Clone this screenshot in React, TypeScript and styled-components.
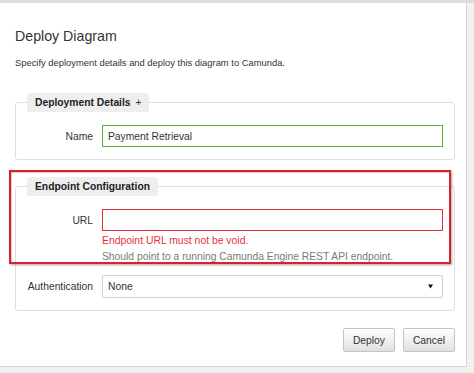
import React from 'react';
import styled, { createGlobalStyle } from 'styled-components';

const GlobalStyle = createGlobalStyle`
  html, body {
    margin: 0;
    padding: 0;
    background: #f1f1f1;
  }
  body {
    font-family: 'Liberation Sans', Arial, sans-serif;
    color: #333;
  }
`;

function App() {
  return (
    <Page>
      <GlobalStyle />
      <Dialog>
        <Title>Deploy Diagram</Title>
        <Intro>Specify deployment details and deploy this diagram to Camunda.</Intro>

        <Section>
          <Legend>
            Deployment Details <Toggle>+</Toggle>
          </Legend>
          <Row>
            <Label>Name</Label>
            <Input state='ok' value='Payment Retrieval' readOnly />
          </Row>
        </Section>

        <Section spaced>
          <Legend>Endpoint Configuration</Legend>
          <Row>
            <Label>URL</Label>
            <Input state='error' value='' readOnly />
          </Row>
          <Row>
            <span />
            <div>
              <ErrorText>Endpoint URL must not be void.</ErrorText>
              <Hint>Should point to a running Camunda Engine REST API endpoint.</Hint>
            </div>
          </Row>
          <Row gapTop={12}>
            <Label>Authentication</Label>
            <Select>
              <span>None</span>
              <svg width='5' height='5' viewBox='0 0 5 5'>
                <polygon points='0,0.5 5,0.5 2.5,4.5' fill='#111' />
              </svg>
            </Select>
          </Row>
        </Section>

        <Footer>
          <Button>Deploy</Button>
          <Button>Cancel</Button>
        </Footer>

        <Highlight />
      </Dialog>
    </Page>
  );
}

const Page = styled.div`
  height: 373px;
  border-top: 3px solid #dcdcdc;
  box-sizing: border-box;
  overflow: hidden;
`;

const Dialog = styled.div`
  position: relative;
  width: 467px;
  box-sizing: border-box;
  padding: 25px 11px 14px 15px;
  background: #fff;
  border-right: 1px solid #d6d6d6;
  border-bottom: 1px solid #d6d6d6;
`;

const Title = styled.h2`
  margin: 0;
  font-size: 14.2px;
  line-height: 17px;
  font-weight: normal;
  color: #333;
`;

const Intro = styled.p`
  margin: 12px 0 0;
  font-size: 9.4px;
  line-height: 12px;
  color: #333;
`;

const Section = styled.fieldset<{ spaced?: boolean }>`
  margin: ${(p) => (p.spaced ? '17px' : '24px')} 0 0;
  padding: 13px 11px 12px;
  min-width: 0;
  border: 1px solid #dedede;
  border-radius: 3px;
`;

const Legend = styled.legend`
  padding: 3px 8px;
  background: #eeeeee;
  border-radius: 3px;
  font-size: 10.3px;
  line-height: 13px;
  font-weight: bold;
  color: #222;
`;

const Toggle = styled.span`
  margin-left: 2px;
  font-weight: normal;
  color: #333;
`;

const Row = styled.div<{ gapTop?: number }>`
  display: grid;
  grid-template-columns: 66px 1fr;
  column-gap: 9px;
  align-items: center;
  margin-top: ${(p) => p.gapTop || 0}px;
`;

const Label = styled.label`
  text-align: right;
  font-size: 10.3px;
  color: #333;
  white-space: nowrap;
`;

const Input = styled.input<{ state: 'ok' | 'error' }>`
  box-sizing: border-box;
  width: 100%;
  height: 22px;
  padding: 0 5px;
  border: 1px solid ${(p) => (p.state === 'ok' ? '#62b330' : '#e2343a')};
  border-radius: 0;
  outline: none;
  font-family: 'Liberation Sans', Arial, sans-serif;
  font-size: 10.3px;
  color: #333;
`;

const ErrorText = styled.div`
  margin-top: 3px;
  font-size: 10.4px;
  line-height: 13px;
  color: #e2343a;
`;

const Hint = styled.div`
  margin-top: 3px;
  font-size: 10.3px;
  line-height: 13px;
  color: #7a7a7a;
`;

const Select = styled.div`
  box-sizing: border-box;
  height: 23px;
  display: flex;
  align-items: center;
  justify-content: space-between;
  padding: 0 9px 0 5px;
  border: 1px solid #cfcfcf;
  border-radius: 2px;
  font-size: 10.3px;
  color: #333;
`;

const Footer = styled.div`
  display: flex;
  justify-content: flex-end;
  gap: 8px;
  margin-top: 17px;
`;

const Button = styled.button`
  height: 24px;
  padding: 0 9px;
  min-width: 51px;
  border: 1px solid #c4c4c4;
  border-radius: 2px;
  background: linear-gradient(#ffffff, #e1e1e1);
  font-family: 'Liberation Sans', Arial, sans-serif;
  font-size: 10.3px;
  color: #333;
`;

const Highlight = styled.div`
  position: absolute;
  left: 9px;
  top: 167px;
  width: 442px;
  height: 94px;
  box-sizing: border-box;
  border: 2px solid #dd1f27;
  box-shadow: 1px 1px 2px rgba(0, 0, 0, 0.35), inset 1px 1px 1px rgba(0, 0, 0, 0.2);
  pointer-events: none;
`;

export default App;
